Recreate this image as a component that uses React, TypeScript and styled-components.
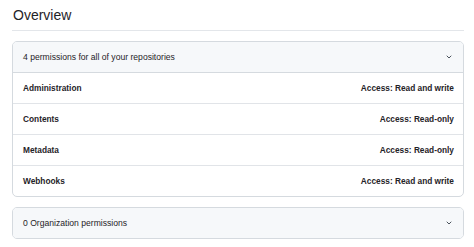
import React from "react";
import styled, { createGlobalStyle } from "styled-components";

const Global = createGlobalStyle`
  html, body { margin: 0; padding: 0; background: #ffffff; }
  body { font-family: "Liberation Sans", Arial, sans-serif; color: #1f2328; }
`;

const Page = styled.div`
  padding: 0 10px 0 12px;
`;

const Title = styled.h2`
  margin: 0;
  padding: 7px 0 7px 1px;
  font-size: 14px;
  line-height: 16px;
  font-weight: 400;
  color: #1f2328;
  border-bottom: 1px solid #e3e6ea;
`;

const Box = styled.div`
  margin-top: 10px;
  border: 1px solid #d5dadf;
  border-radius: 5px;
  overflow: hidden;
  background: #ffffff;
`;

const Header = styled.div<{ $open?: boolean }>`
  display: flex;
  align-items: center;
  justify-content: space-between;
  height: 30px;
  padding: 0 11px 0 10px;
  background: #f6f8fa;
  border-bottom: ${(p) => (p.$open ? "1px solid #d5dadf" : "none")};
  font-size: 8.6px;
  color: #1f2328;
`;

const Row = styled.div`
  display: flex;
  align-items: center;
  justify-content: space-between;
  height: 30px;
  padding: 0 9px 0 10px;
  font-size: 8.3px;
  font-weight: 700;
  color: #1f2328;
  & + & {
    border-top: 1px solid #e1e4e8;
  }
`;

const Chevron = () => (
  <svg width="6" height="4" viewBox="0 0 6 4" aria-hidden>
    <path d="M1 1 L3 3 L5 1" fill="none" stroke="#4a525b" strokeWidth="1" strokeLinecap="round" strokeLinejoin="round" />
  </svg>
);

const perms = [
  ["Administration", "Access: Read and write"],
  ["Contents", "Access: Read-only"],
  ["Metadata", "Access: Read-only"],
  ["Webhooks", "Access: Read and write"],
];

export default function App() {
  return (
    <>
      <Global />
      <Page>
        <Title>Overview</Title>
        <Box>
          <Header $open>
            <span>4 permissions for all of your repositories</span>
            <Chevron />
          </Header>
          {perms.map(([name, access]) => (
            <Row key={name}>
              <span>{name}</span>
              <span>{access}</span>
            </Row>
          ))}
        </Box>
        <Box>
          <Header>
            <span>0 Organization permissions</span>
            <Chevron />
          </Header>
        </Box>
      </Page>
    </>
  );
}
